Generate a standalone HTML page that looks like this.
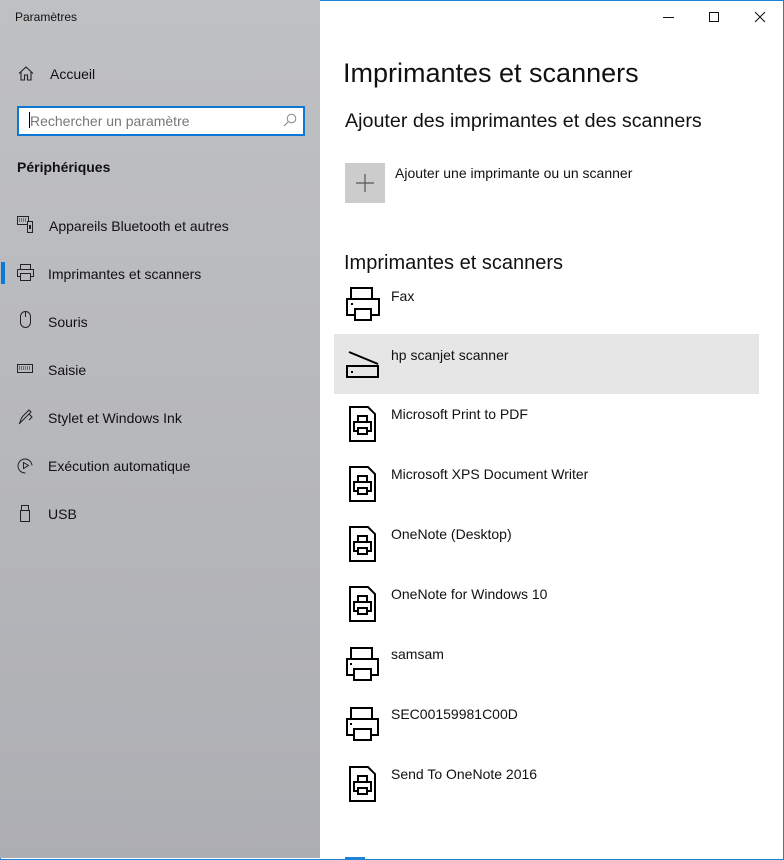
<!DOCTYPE html>
<html><head><meta charset="utf-8"><style>
*{margin:0;padding:0;box-sizing:border-box}
body{width:784px;height:860px;overflow:hidden;font-family:"Liberation Sans",sans-serif;background:#fff;position:relative;color:#000}
.win{position:absolute;left:0;top:0;width:784px;height:860px;border:1px solid #1883d7}
.left{position:absolute;left:0;top:0;width:320px;height:858px;background:linear-gradient(180deg,#bfc0c2 0%,#b9babd 40%,#adaeb3 100%)}
.t{position:absolute;white-space:nowrap}
.nav{position:absolute;left:48px;font-size:14px;color:#111}
.ic{position:absolute}
.row{position:absolute;left:334px;width:425px;height:60px}
.row .nm{position:absolute;left:57px;top:12px;font-size:14px;color:#111}
.row svg{position:absolute;left:10px;top:10px;overflow:visible}
</style></head><body>
<div class="win"></div>
<div class="left"></div>
<div class="t" style="left:15px;top:10px;font-size:12px;color:#111">Paramètres</div>
<div style="position:absolute;left:663px;top:17px;width:11px;height:1px;background:#111"></div>
<div style="position:absolute;left:709px;top:12px;width:10px;height:10px;border:1px solid #111"></div>
<svg style="position:absolute;left:754px;top:11px" width="12" height="12"><path d="M1 1L11 11M11 1L1 11" stroke="#111" stroke-width="1"/></svg>

<svg class="ic" style="left:18px;top:66px" width="16" height="15" viewBox="0 0 16 15"><path d="M1 7.5L8 1l7 6.5M3 6v8h3.5V9h3v5H13V6" fill="none" stroke="#222" stroke-width="1.1"/></svg>
<div class="t" style="left:50px;top:66px;font-size:14px;color:#111">Accueil</div>

<div style="position:absolute;left:17px;top:106px;width:288px;height:30px;background:#fff;border:2px solid #0d78d6"></div>
<div style="position:absolute;left:29px;top:112px;width:1px;height:16px;background:#000"></div>
<div class="t" style="left:30px;top:113px;font-size:14px;color:#777">Rechercher un paramètre</div>
<svg class="ic" style="left:283px;top:113px" width="14" height="14"><circle cx="8.5" cy="5.5" r="4.3" fill="none" stroke="#888"/><path d="M5.5 8.5L1 13" stroke="#888"/></svg>

<div class="t" style="left:17px;top:159px;font-size:14px;font-weight:bold;color:#111">Périphériques</div>

<svg class="ic" style="left:17px;top:216px" width="17" height="17"><rect x="0.5" y="0.5" width="11" height="8" fill="none" stroke="#222"/><path d="M2 3h8M2 5h8" stroke="#222" stroke-dasharray="1 1"/><rect x="10.5" y="5.5" width="5" height="11" fill="#bbb" stroke="#222"/><rect x="12" y="9" width="2" height="4" fill="#222"/></svg>
<div class="nav" style="top:218px;left:49px">Appareils Bluetooth et autres</div>

<div style="position:absolute;left:1px;top:262px;width:4px;height:22px;background:#0d78d6"></div>
<svg class="ic" style="left:17px;top:264px" width="17" height="17"><path d="M3.5 5.5V.5h10v5M.5 5.5h16v7h-3M3.5 12.5h-3v-7M3.5 9.5h10v7h-10z" fill="none" stroke="#222"/></svg>
<div class="nav" style="top:266px">Imprimantes et scanners</div>

<svg class="ic" style="left:20px;top:311px" width="12" height="18"><rect x="0.5" y="0.5" width="10" height="16" rx="5" fill="none" stroke="#222"/><path d="M5.5 1v5" stroke="#222"/></svg>
<div class="nav" style="top:314px">Souris</div>

<svg class="ic" style="left:17px;top:364px" width="16" height="10"><rect x="0.5" y="0.5" width="15" height="8" fill="none" stroke="#222"/><path d="M2 3h12M2 5h12" stroke="#222" stroke-dasharray="1 1"/></svg>
<div class="nav" style="top:362px">Saisie</div>

<svg class="ic" style="left:17px;top:408px" width="17" height="18"><path d="M2 16c2-2 1-5 4-8l6-6 2 2-6 6c-3 3-4 4-6 6zM12 6l3 3-3 3" fill="none" stroke="#222"/></svg>
<div class="nav" style="top:410px">Stylet et Windows Ink</div>

<svg class="ic" style="left:17px;top:457px" width="17" height="18"><path d="M8.5 16A7 7 0 1 1 15 8.5" fill="none" stroke="#222"/><path d="M6.5 5.5v6l5-3z" fill="none" stroke="#222"/></svg>
<div class="nav" style="top:458px">Exécution automatique</div>

<svg class="ic" style="left:20px;top:505px" width="10" height="17"><rect x="1.5" y="0.5" width="7" height="5" fill="none" stroke="#222"/><rect x="0.5" y="5.5" width="9" height="11" fill="none" stroke="#222"/></svg>
<div class="nav" style="top:506px">USB</div>

<div class="t" style="left:343px;top:58px;font-size:27px;color:#111">Imprimantes et scanners</div>
<div class="t" style="left:345px;top:110px;font-size:19.7px;color:#111">Ajouter des imprimantes et des scanners</div>
<div style="position:absolute;left:345px;top:163px;width:40px;height:40px;background:#ccc"></div>
<svg class="ic" style="left:356px;top:174px" width="18" height="18"><path d="M9 0v18M0 9h18" stroke="#555" stroke-width="1.2"/></svg>
<div class="t" style="left:395px;top:165px;font-size:14px;color:#111">Ajouter une imprimante ou un scanner</div>
<div class="t" style="left:344px;top:252px;font-size:20px;color:#111">Imprimantes et scanners</div>

<div class="row" style="top:276px"><svg width="38" height="36"><rect x="7" y="2" width="21" height="11" fill="none" stroke="#000" stroke-width="2"/><rect x="3" y="13" width="32" height="16" fill="#fff" stroke="#000" stroke-width="2"/><rect x="11" y="23" width="16" height="11" fill="#fff" stroke="#000" stroke-width="2"/><rect x="7" y="17" width="2" height="2"/></svg><div class="nm">Fax</div></div>

<div class="row" style="top:334px;background:#e6e6e6"><svg width="38" height="36"><path d="M5 8l29 12" stroke="#000" stroke-width="2"/><rect x="3" y="22" width="31" height="11" fill="none" stroke="#000" stroke-width="2"/><rect x="7" y="27" width="2" height="2"/></svg><div class="nm" style="top:13px">hp scanjet scanner</div></div>

<div class="row" style="top:394px"><svg width="36" height="36" style="top:12px"><path d="M6 1h18l7 7v27H6z" fill="none" stroke="#000" stroke-width="2"/><rect x="14" y="10" width="9" height="6" fill="none" stroke="#000" stroke-width="2"/><rect x="10" y="16" width="17" height="9" fill="none" stroke="#000" stroke-width="2"/><rect x="14" y="22" width="9" height="6" fill="#fff" stroke="#000" stroke-width="2"/></svg><div class="nm">Microsoft Print to PDF</div></div>

<div class="row" style="top:454px"><svg width="36" height="36" style="top:12px"><path d="M6 1h18l7 7v27H6z" fill="none" stroke="#000" stroke-width="2"/><rect x="14" y="10" width="9" height="6" fill="none" stroke="#000" stroke-width="2"/><rect x="10" y="16" width="17" height="9" fill="none" stroke="#000" stroke-width="2"/><rect x="14" y="22" width="9" height="6" fill="#fff" stroke="#000" stroke-width="2"/></svg><div class="nm">Microsoft XPS Document Writer</div></div>

<div class="row" style="top:514px"><svg width="36" height="36" style="top:12px"><path d="M6 1h18l7 7v27H6z" fill="none" stroke="#000" stroke-width="2"/><rect x="14" y="10" width="9" height="6" fill="none" stroke="#000" stroke-width="2"/><rect x="10" y="16" width="17" height="9" fill="none" stroke="#000" stroke-width="2"/><rect x="14" y="22" width="9" height="6" fill="#fff" stroke="#000" stroke-width="2"/></svg><div class="nm">OneNote (Desktop)</div></div>

<div class="row" style="top:574px"><svg width="36" height="36" style="top:12px"><path d="M6 1h18l7 7v27H6z" fill="none" stroke="#000" stroke-width="2"/><rect x="14" y="10" width="9" height="6" fill="none" stroke="#000" stroke-width="2"/><rect x="10" y="16" width="17" height="9" fill="none" stroke="#000" stroke-width="2"/><rect x="14" y="22" width="9" height="6" fill="#fff" stroke="#000" stroke-width="2"/></svg><div class="nm">OneNote for Windows 10</div></div>

<div class="row" style="top:636px"><svg width="38" height="36"><rect x="7" y="2" width="21" height="11" fill="none" stroke="#000" stroke-width="2"/><rect x="3" y="13" width="31" height="16" fill="#fff" stroke="#000" stroke-width="2"/><rect x="10" y="23" width="17" height="11" fill="#fff" stroke="#000" stroke-width="2"/><rect x="6" y="17" width="2" height="2"/></svg><div class="nm" style="top:10px">samsam</div></div>

<div class="row" style="top:696px"><svg width="38" height="36"><rect x="7" y="2" width="21" height="11" fill="none" stroke="#000" stroke-width="2"/><rect x="3" y="13" width="31" height="16" fill="#fff" stroke="#000" stroke-width="2"/><rect x="10" y="23" width="17" height="11" fill="#fff" stroke="#000" stroke-width="2"/><rect x="6" y="17" width="2" height="2"/></svg><div class="nm" style="top:10px">SEC00159981C00D</div></div>

<div class="row" style="top:754px"><svg width="36" height="36" style="top:12px"><path d="M6 1h18l7 7v27H6z" fill="none" stroke="#000" stroke-width="2"/><rect x="14" y="10" width="9" height="6" fill="none" stroke="#000" stroke-width="2"/><rect x="10" y="16" width="17" height="9" fill="none" stroke="#000" stroke-width="2"/><rect x="14" y="22" width="9" height="6" fill="#fff" stroke="#000" stroke-width="2"/></svg><div class="nm">Send To OneNote 2016</div></div>

<div style="position:absolute;left:345px;top:857px;width:20px;height:3px;background:#1883d7"></div>
</body></html>
